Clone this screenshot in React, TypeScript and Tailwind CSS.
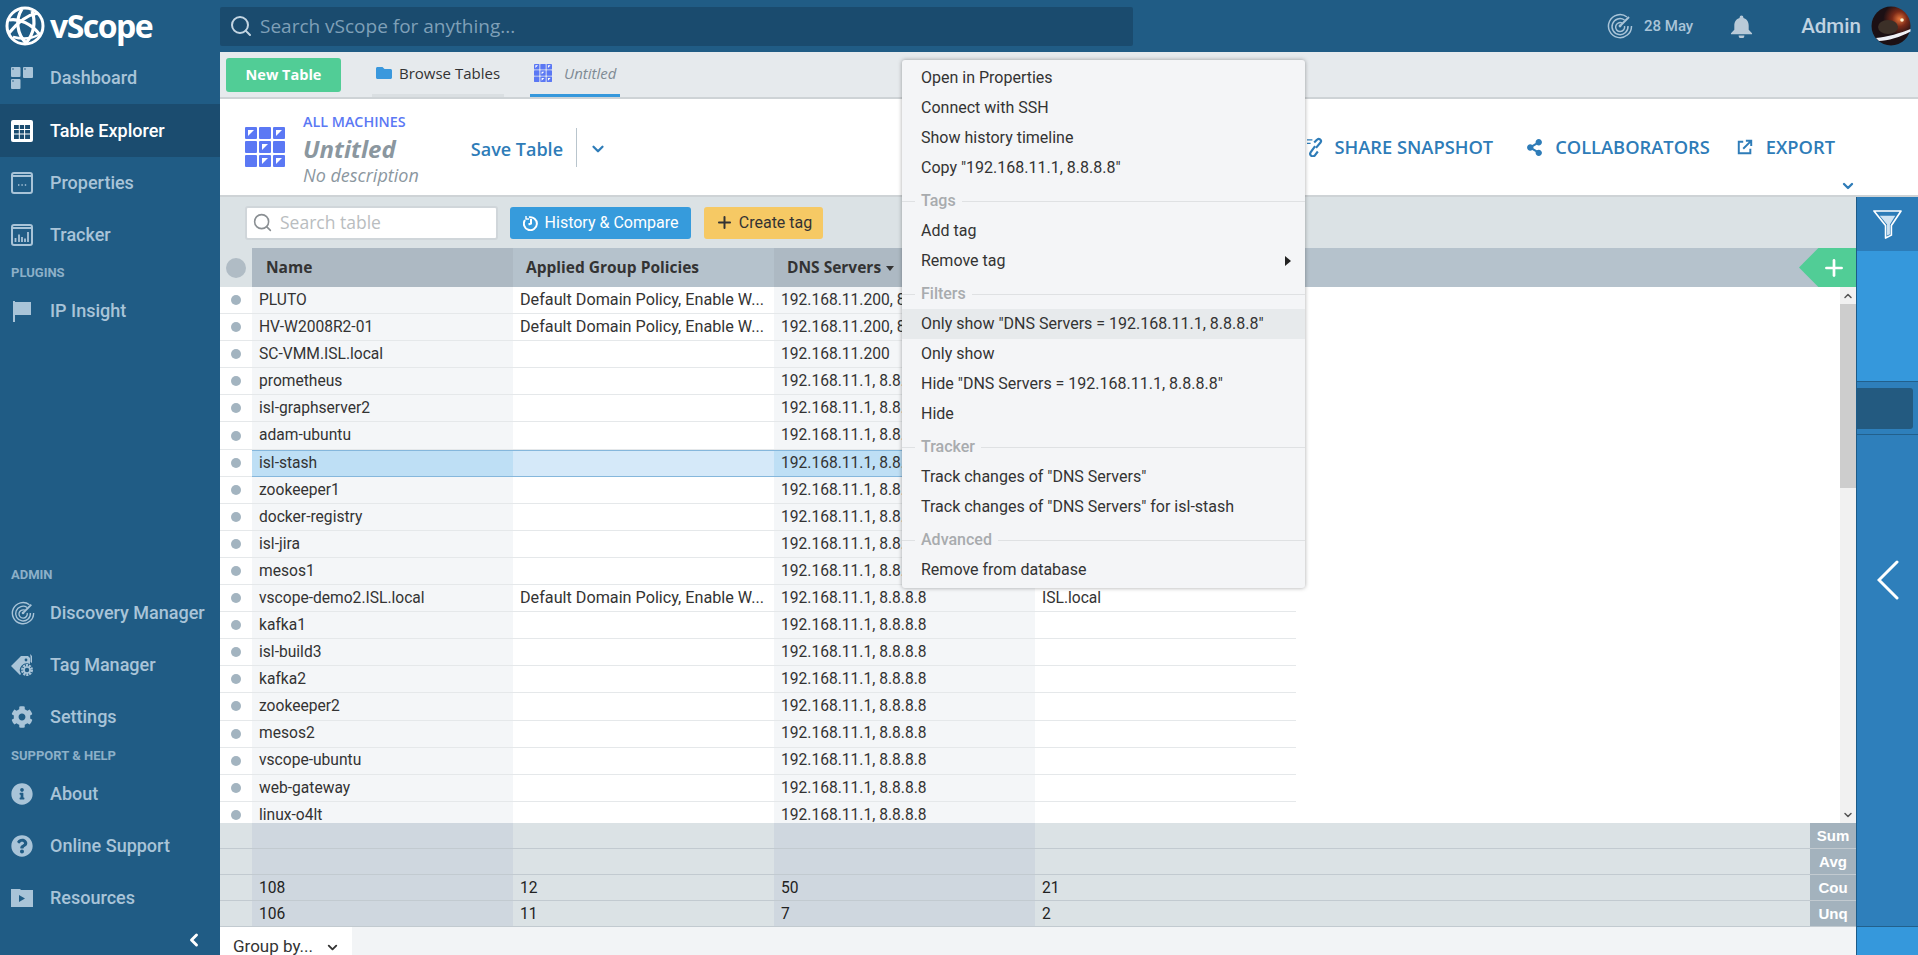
import { ChevronDown, ChevronLeft, ChevronUp, Plus, Search } from "lucide-react";
import { FaCog, FaFolder, FaInfoCircle, FaQuestionCircle, FaShareAlt } from "react-icons/fa";
import type { ReactNode } from "react";

const POLICY = "Default Domain Policy, Enable W...";
const DNS = "192.168.11.1, 8.8.8.8";
const DNS_OLD = "192.168.11.200, 8.8.8.8";

const rows = [
  { name: "PLUTO", policy: POLICY, dns: DNS_OLD },
  { name: "HV-W2008R2-01", policy: POLICY, dns: DNS_OLD },
  { name: "SC-VMM.ISL.local", dns: "192.168.11.200" },
  { name: "prometheus", dns: DNS },
  { name: "isl-graphserver2", dns: DNS },
  { name: "adam-ubuntu", dns: DNS },
  { name: "isl-stash", dns: DNS, selected: true },
  { name: "zookeeper1", dns: DNS },
  { name: "docker-registry", dns: DNS },
  { name: "isl-jira", dns: DNS },
  { name: "mesos1", dns: DNS },
  { name: "vscope-demo2.ISL.local", policy: POLICY, dns: DNS, domain: "ISL.local" },
  { name: "kafka1", dns: DNS },
  { name: "isl-build3", dns: DNS },
  { name: "kafka2", dns: DNS },
  { name: "zookeeper2", dns: DNS },
  { name: "mesos2", dns: DNS },
  { name: "vscope-ubuntu", dns: DNS },
  { name: "web-gateway", dns: DNS },
  { name: "linux-o4lt", dns: DNS },
];

const footerRows = [
  { label: "Sum", values: ["", "", "", ""] },
  { label: "Avg", values: ["", "", "", ""] },
  { label: "Cou", values: ["108", "12", "50", "21"] },
  { label: "Unq", values: ["106", "11", "7", "2"] },
];

function Globe() {
  return (
    <svg viewBox="0 0 40 40" className="h-[40px] w-[40px]" fill="none" stroke="#fff">
      <circle cx="20" cy="20" r="18" strokeWidth="3" />
      <path d="M4 27C12 17 22 9 33 7" strokeWidth="3.200" />
      <path d="M4 14C14 12 27 18 35 29" strokeWidth="3.200" />
      <path d="M17 3C10 14 12 28 21 37" strokeWidth="3.200" />
      <path d="M27 5C31 16 29 28 21 37" strokeWidth="3.200" />
      <path d="M8 31C16 33 26 33 33 29" strokeWidth="2.400" />
    </svg>
  );
}

function Radar({ className }: { className: string }) {
  return (
    <svg viewBox="0 0 26 26" className={className} fill="none" stroke="currentColor" strokeWidth="1.5">
      <path d="M20 4A11.5 11.5 0 1 0 24.5 13" />
      <path d="M17.5 7A8 8 0 1 0 21 13" />
      <path d="M15 10A4.5 4.5 0 1 0 17.5 13" />
      <path d="M13 13L22 4" strokeWidth="2" />
      <circle cx="13" cy="13" r="1.4" fill="currentColor" stroke="none" />
    </svg>
  );
}

function GridIcon({ size }: { size: number }) {
  const marked = [0, 2, 4, 7, 8];
  return (
    <svg viewBox="0 0 40 40" width={size} height={size}>
      {Array.from({ length: 9 }).map((_, i) => {
        const x = (i % 3) * 14;
        const y = Math.floor(i / 3) * 14;
        return (
          <g key={i}>
            <rect x={x} y={y} width="12" height="12" rx="1" fill="#5b78f4" />
            {marked.includes(i) ? (
              <path d={`M${x + 3} ${y + 9}V${y + 3}H${x + 9}Z`} fill="#fff" />
            ) : null}
          </g>
        );
      })}
    </svg>
  );
}

function DashboardIcon() {
  return (
    <svg viewBox="0 0 22 22" className="h-[22px] w-[22px]" fill="currentColor">
      <rect x="0" y="0" width="9.5" height="10" rx="1" />
      <rect x="12" y="0" width="10" height="11" rx="1" />
      <rect x="0" y="12" width="9.5" height="10" rx="1" />
      <g fill="#205c85">
        <circle cx="2" cy="2" r=".8" />
        <circle cx="14" cy="2" r=".8" />
        <circle cx="2" cy="14" r=".8" />
      </g>
    </svg>
  );
}

function TableIcon() {
  return (
    <svg viewBox="0 0 22 22" className="h-[22px] w-[22px]" fill="none">
      <rect x="0" y="0" width="22" height="22" rx="2" fill="#fff" />
      <rect x="3" y="5" width="16" height="14" fill="#1b4c6f" />
      <path d="M3 9.5H19M3 14H19M8.3 5V19M13.6 5V19" stroke="#fff" strokeWidth="1" />
    </svg>
  );
}

function PropertiesIcon() {
  return (
    <svg viewBox="0 0 22 22" className="h-[22px] w-[22px]" fill="none" stroke="currentColor">
      <rect x="1" y="1" width="20" height="20" rx="2" strokeWidth="2" />
      <path d="M1 4H21" strokeWidth="2" />
      <path d="M7 13H8.4M10.4 13H11.8M13.8 13H15.2" strokeWidth="1.6" />
    </svg>
  );
}

function TrackerIcon() {
  return (
    <svg viewBox="0 0 22 22" className="h-[22px] w-[22px]" fill="none" stroke="currentColor">
      <rect x="1" y="1" width="20" height="20" rx="2" strokeWidth="2" />
      <path d="M1 4H21" strokeWidth="2" />
      <path d="M4.500 18V14M8 18V10.500M11 18V13M14 18V14.500M17 18V8" strokeWidth="1.8" />
    </svg>
  );
}

function FlagIcon() {
  return (
    <svg viewBox="0 0 22 22" className="h-[22px] w-[22px]" fill="currentColor">
      <path d="M2 1H4V22H2Z" />
      <path d="M4 2H20V15H4Z" />
    </svg>
  );
}

function TagGearIcon() {
  return (
    <svg viewBox="0 0 24 24" className="h-[24px] w-[24px]" fill="currentColor">
      <path d="M0 13L10 3H17L19 5V11A7 7 0 0 0 10 21L9 22Z" />
      <path d="M19 1L21 3V10L19.500 9V3.500Z" />
      <circle cx="15" cy="7" r="1.4" fill="#205c85" />
      <circle cx="16" cy="17" r="4.500" fill="none" stroke="currentColor" strokeWidth="3" strokeDasharray="2 .8" />
      <circle cx="16" cy="17" r="3" fill="none" stroke="currentColor" strokeWidth="1.600" />
    </svg>
  );
}

function PlayIcon() {
  return (
    <svg viewBox="0 0 22 18" className="h-[18px] w-[22px]">
      <path d="M0 0H9L10 1H22V18H0Z" fill="currentColor" />
      <path d="M8 6L14 9.500L8 13Z" fill="#205c85" />
    </svg>
  );
}

function BellIcon() {
  return (
    <svg viewBox="0 0 24 24" className="ml-[37px] h-[23px] w-[23px] text-[#b9cad8]" fill="currentColor">
      <path d="M12 .5a2 2 0 0 1 2 2v.7c3.500.9 5.500 4 5.500 8v4.300l3.500 3.500v1H1v-1l3.500-3.500v-4.300c0-4 2-7.100 5.500-8v-.7a2 2 0 0 1 2-2z" />
      <path d="M9 21.500h6a3 3 0 0 1-6 0z" />
    </svg>
  );
}

function Funnel() {
  return (
    <svg viewBox="0 0 30 30" className="h-[29px] w-[29px]" fill="none" stroke="#fff">
      <path d="M1 1H29L19 16V26L13 29V16Z" strokeWidth="1.700" strokeLinejoin="round" />
      <path d="M7 6H23L17.500 15V25L14.500 26.500V15Z" fill="#cfe3f2" stroke="none" />
    </svg>
  );
}

function LinkIcon() {
  return (
    <svg viewBox="0 0 20 22" className="h-[20px] w-[18px]" fill="none" stroke="#2e7cb8" strokeWidth="2.400">
      <path d="M9 10L4 17A2.500 2.500 0 0 0 9 20L12 16" />
      <path d="M10 12L15 6A2.500 2.500 0 0 0 11 3L8 6" />
      <path d="M0 3H6M0 7H4" strokeWidth="1.500" />
    </svg>
  );
}

function ExportIcon() {
  return (
    <svg viewBox="0 0 18 18" className="h-[16px] w-[16px]" fill="none" stroke="#2e7cb8" strokeWidth="2.200">
      <path d="M7 3H2V16H15V11" />
      <path d="M7 11L15 3M10 2H16V8" />
    </svg>
  );
}

function HistoryIcon() {
  return (
    <svg viewBox="0 0 16 16" className="h-[16px] w-[16px]" fill="none" stroke="#fff" strokeWidth="2">
      <path d="M6 2.300A6.500 6.500 0 1 1 2 5" />
      <path d="M8 4V8.500L5.500 9.500" />
      <path d="M3 1V4H6" strokeWidth="1.400" />
    </svg>
  );
}

function Avatar() {
  return (
    <svg viewBox="0 0 40 40" className="h-[40px] w-[40px]">
      <defs>
        <radialGradient id="glow" cx="0.72" cy="0.32" r="0.42">
          <stop offset="0" stopColor="#e8783c" />
          <stop offset="0.45" stopColor="#7a2a18" />
          <stop offset="1" stopColor="#1c1014" />
        </radialGradient>
      </defs>
      <circle cx="20" cy="20" r="19.500" fill="url(#glow)" />
      <ellipse cx="17" cy="21" rx="10" ry="7" fill="#3c3028" />
      <path d="M5 32C16 31 30 27 39.500 23V25.500C30 31 16 35 8 35Z" fill="#eef0f6" />
      <circle cx="31" cy="14" r="1.800" fill="#fff3d0" />
    </svg>
  );
}

function NavItem({ icon, label, active }: { icon: ReactNode; label: string; active?: boolean }) {
  return (
    <div className={active ? "flex h-[53px] items-center bg-[#1b4c6f] pl-[11px] text-white" : "flex h-[52px] items-center pl-[11px] text-[#a9c4d8]"}>
      <span className="flex w-[39px] shrink-0 items-center">{icon}</span>
      <span className={active ? "text-[18px] font-medium" : "mb-[2px] text-[18px] font-medium"}>{label}</span>
    </div>
  );
}

function NavLabel({ children, className }: { children: ReactNode; className: string }) {
  return (
    <div className={`flex items-center pl-[11px] text-[13px] font-bold text-[#8db0c8] ${className}`}>
      {children}
    </div>
  );
}

function Sidebar() {
  return (
    <aside className="flex w-[220px] shrink-0 flex-col bg-[#205c85]">
      <NavItem icon={<DashboardIcon />} label="Dashboard" />
      <NavItem icon={<TableIcon />} label="Table Explorer" active />
      <NavItem icon={<PropertiesIcon />} label="Properties" />
      <NavItem icon={<TrackerIcon />} label="Tracker" />
      <NavLabel className="h-[24px]">PLUGINS</NavLabel>
      <NavItem icon={<FlagIcon />} label="IP Insight" />
      <div className="flex-1" />
      <NavLabel className="h-[24px]">ADMIN</NavLabel>
      <NavItem icon={<Radar className="h-[24px] w-[24px]" />} label="Discovery Manager" />
      <NavItem icon={<TagGearIcon />} label="Tag Manager" />
      <NavItem icon={<FaCog size={22} />} label="Settings" />
      <NavLabel className="h-[25px]">SUPPORT &amp; HELP</NavLabel>
      <NavItem icon={<FaInfoCircle size={22} />} label="About" />
      <NavItem icon={<FaQuestionCircle size={22} />} label="Online Support" />
      <NavItem icon={<PlayIcon />} label="Resources" />
      <div className="flex h-[31px] items-center justify-end pr-[16px] text-white">
        <ChevronLeft size={20} strokeWidth={3.5} />
      </div>
    </aside>
  );
}

function TopBar() {
  return (
    <header className="flex h-[52px] shrink-0 items-center bg-[#205c85]">
      <div className="flex w-[220px] shrink-0 items-center gap-[5px] pl-[5px]">
        <Globe />
        <span className="font-['Open_Sans'] text-[32px] font-bold tracking-[-1.5px] text-white">vScope</span>
      </div>
      <div className="flex h-[39px] w-[913px] items-center gap-[7px] rounded-[2px] bg-[#1a4b6e] pl-[9px]">
        <Search size={24} strokeWidth={2} className="text-[#c3d5e2]" />
        <span className="font-['Open_Sans'] text-[19px] text-[#7fa0b8]">Search vScope for anything...</span>
      </div>
      <div className="flex flex-1 items-center text-[#a9c4d8]">
        <Radar className="ml-[474px] h-[26px] w-[26px]" />
        <span className="ml-[11px] text-[15px] font-medium">28 May</span>
        <BellIcon />
        <span className="ml-[48px] text-[20.500px] font-medium text-[#c0d3e1]">Admin</span>
        <span className="ml-[10px]"><Avatar /></span>
      </div>
    </header>
  );
}

function TabsBar() {
  return (
    <div className="flex h-[47px] shrink-0 border-b-2 border-[#ced3d6] bg-[#e6eaed] pl-[6px] font-['Open_Sans']">
      <button className="mt-[6px] h-[34px] w-[115px] rounded-[3px] bg-[#51cd96] text-[14.500px] font-bold text-white">
        New Table
      </button>
      <div className="ml-[31px] flex h-[45px] w-[132px] items-center gap-[7px] border-b-[3px] border-[#dadfe2] pl-[4px] text-[15px] text-[#333]">
        <FaFolder size={16} className="text-[#3a98dd]" />
        Browse Tables
      </div>
      <div className="ml-[26px] flex h-[45px] w-[90px] items-center gap-[12px] border-b-[3px] border-[#3598dc] pl-[4px] text-[15px] italic text-[#7f8b94]">
        <GridIcon size={18} />
        Untitled
      </div>
    </div>
  );
}

function TitlePanel() {
  return (
    <div className="relative flex h-[98px] shrink-0 items-center border-b-2 border-[#ced3d6] bg-white pl-[25px] font-['Open_Sans']">
      <GridIcon size={40} />
      <div className="ml-[18px] mt-[2px] flex flex-col">
        <span className="text-[14.300px] font-semibold leading-[27px] text-[#5b78f4]">ALL MACHINES</span>
        <span className="text-[24px] font-bold italic leading-[27px] text-[#8b979f]">Untitled</span>
        <span className="text-[18px] italic leading-[27px] text-[#8b979f]">No description</span>
      </div>
      <span className="ml-[52px] mt-[4px] text-[18px] font-semibold text-[#2e7cb8]">Save Table</span>
      <span className="ml-[13px] h-[39px] w-px bg-[#b9c5cd]" />
      <ChevronDown size={18} strokeWidth={3} className="ml-[12px] mt-[4px] text-[#2e7cb8]" />
      <div className="flex flex-1 items-center pr-[83px] text-[18.300px] font-semibold text-[#2e7cb8]">
        <div className="ml-auto flex items-center gap-[9px]"><LinkIcon />SHARE SNAPSHOT</div>
        <div className="ml-[33px] flex items-center gap-[12px]"><FaShareAlt size={17} />COLLABORATORS</div>
        <div className="ml-[27px] flex items-center gap-[13px]"><ExportIcon />EXPORT</div>
      </div>
      <ChevronDown size={16} strokeWidth={3.5} className="absolute bottom-[1px] right-[62px] text-[#2e7cb8]" />
    </div>
  );
}

function Toolbar() {
  return (
    <div className="flex h-[51px] shrink-0 items-center bg-[#dbe2e5] pl-[25px] text-[16px]">
      <div className="flex h-[34px] w-[253px] items-center gap-[7px] rounded-[3px] border-2 border-[#d0d6da] bg-white pl-[5px] text-[#b9bdc0]">
        <Search size={21} strokeWidth={1.8} className="text-[#8a8f93]" />
        <span className="font-['Open_Sans'] text-[17.500px]">Search table</span>
      </div>
      <div className="ml-[12px] flex h-[32px] w-[181px] items-center justify-center gap-[6px] rounded-[3px] bg-[#369bdc] text-white">
        <HistoryIcon />
        History &amp; Compare
      </div>
      <div className="ml-[13px] flex h-[32px] w-[119px] items-center justify-center gap-[5px] rounded-[3px] bg-[#f6c964] text-[#333]">
        <Plus size={19} strokeWidth={2.5} />
        Create tag
      </div>
    </div>
  );
}

function TableHead() {
  return (
    <div className="relative flex h-[39px] shrink-0 items-center bg-[#b5c2cc] font-['Open_Sans'] text-[15.500px] font-bold text-[#333]">
      <div className="flex h-full w-[32px] items-center bg-[#dbe2e5] pl-[6px]">
        <span className="h-[20px] w-[20px] rounded-full bg-[#b0bcc5]" />
      </div>
      <div className="flex h-full w-[261px] items-center bg-[#adb9c3] pl-[14px]">Name</div>
      <div className="flex h-full w-[261px] items-center pl-[13px]">Applied Group Policies</div>
      <div className="flex h-full w-[261px] items-center gap-[5px] bg-[#adb9c3] pl-[13px]">
        DNS Servers
        <span className="mt-[1px] h-0 w-0 border-x-[4px] border-t-[5px] border-x-transparent border-t-[#333]" />
      </div>
      <div className="absolute right-0 top-0 flex h-full w-[57px] items-center justify-end bg-[#51cd96] pr-[9px] text-white [clip-path:polygon(34%_0,100%_0,100%_100%,34%_100%,0_50%)]">
        <Plus size={26} strokeWidth={2.5} />
      </div>
    </div>
  );
}

function TableBody() {
  return (
    <div className="flex h-[536px] shrink-0 bg-white">
      <div className="flex-1 overflow-hidden text-[15.600px] text-[#333]">
        {rows.map((row) => {
          const tinted = row.selected ? "bg-[#bedff5]" : "bg-[#f4f6f8]";
          const plain = row.selected ? "bg-[#d5e9f9]" : "";
          const line = row.selected ? "border-y border-[#85b7dc]" : "border-b border-[#e5e8ea]";
          return (
            <div key={row.name} className="flex h-[27.1px]">
              <div className="flex w-[32px] items-center border-b border-[#e5e8ea] pl-[11px]">
                <span className="h-[10px] w-[10px] rounded-full bg-[#a3b4c0]" />
              </div>
              <div className={`flex w-[261px] items-center pl-[7px] pt-px ${tinted} ${line}`}>{row.name}</div>
              <div className={`flex w-[261px] items-center whitespace-nowrap pl-[7px] pt-px text-[16.200px] ${plain} ${line}`}>{row.policy}</div>
              <div className={`flex w-[261px] items-center pl-[7px] pt-px ${tinted} ${line}`}>{row.dns}</div>
              <div className={`flex w-[261px] items-center pl-[7px] pt-px ${plain} ${line}`}>{row.domain}</div>
            </div>
          );
        })}
      </div>
      <div className="flex w-[16px] shrink-0 flex-col bg-[#f1f1f1] text-[#555]">
        <div className="flex h-[17px] items-center justify-center">
          <ChevronUp size={12} strokeWidth={3} />
        </div>
        <div className="h-[184px] bg-[#cdcdcd]" />
        <div className="flex-1" />
        <div className="flex h-[17px] items-center justify-center">
          <ChevronDown size={12} strokeWidth={3} />
        </div>
      </div>
    </div>
  );
}

function TableFooter() {
  return (
    <div className="shrink-0 text-[15.600px] text-[#222]">
      {footerRows.map((row) => (
        <div key={row.label} className="flex h-[26px] border-b border-[#c2cad0] bg-[#dbe2e5]">
          <div className="w-[32px]" />
          <div className="flex w-[261px] items-center bg-[#cfd7df] pl-[7px] pt-[2px]">{row.values[0]}</div>
          <div className="flex w-[261px] items-center pl-[7px] pt-[2px]">{row.values[1]}</div>
          <div className="flex w-[261px] items-center bg-[#cfd7df] pl-[7px] pt-[2px]">{row.values[2]}</div>
          <div className="flex w-[261px] items-center pl-[7px] pt-[2px]">{row.values[3]}</div>
          <div className="flex-1" />
          <div className="flex w-[46px] items-center justify-center bg-[#a3b2bd] pt-[2px] font-['Liberation_Sans'] text-[15px] font-bold text-white">
            {row.label}
          </div>
        </div>
      ))}
    </div>
  );
}

function RightPanel() {
  return (
    <div className="flex w-[62px] shrink-0 flex-col border-l border-[#1d5b88] bg-[#2e7fbb]">
      <div className="flex h-[54px] items-center justify-center bg-[#2c7cb8]">
        <Funnel />
      </div>
      <div className="h-[131px] border-b border-[#22608c] bg-[#3598dc]" />
      <div className="flex h-[53px] items-center border-b border-[#22608c] pr-[5px]">
        <div className="h-[41px] w-full rounded-r-[3px] bg-[#235a80]" />
      </div>
      <div className="flex flex-1 justify-center pt-[125px] text-white">
        <svg viewBox="0 0 22 40" className="h-[40px] w-[22px]" fill="none" stroke="currentColor" strokeWidth="3" strokeLinecap="round">
          <path d="M20 2L2 20L20 38" />
        </svg>
      </div>
      <div className="h-[29px] border-t border-[#22608c] bg-[#3598dc]" />
    </div>
  );
}

type MenuEntry = { label: string; heading?: boolean; active?: boolean; caret?: boolean };

const menuEntries: MenuEntry[] = [
  { label: "Open in Properties" },
  { label: "Connect with SSH" },
  { label: "Show history timeline" },
  { label: 'Copy "192.168.11.1, 8.8.8.8"' },
  { label: "Tags", heading: true },
  { label: "Add tag" },
  { label: "Remove tag", caret: true },
  { label: "Filters", heading: true },
  { label: 'Only show "DNS Servers = 192.168.11.1, 8.8.8.8"', active: true },
  { label: "Only show" },
  { label: 'Hide "DNS Servers = 192.168.11.1, 8.8.8.8"' },
  { label: "Hide" },
  { label: "Tracker", heading: true },
  { label: 'Track changes of "DNS Servers"' },
  { label: 'Track changes of "DNS Servers" for isl-stash' },
  { label: "Advanced", heading: true },
  { label: "Remove from database" },
];

function ContextMenu() {
  return (
    <div className="absolute left-[902px] top-[60px] w-[403px] rounded-[3px] bg-[#f4f5f7] pb-[3px] pt-[3px] text-[16px] text-[#333] shadow-[0_0_4px_rgba(0,0,0,0.35)]">
      {menuEntries.map((entry) =>
        entry.heading ? (
          <div key={entry.label} className="flex h-[33px] items-center pt-[3px] text-[#a8abae]">
            <span className="h-px w-[13px] bg-[#dfe1e3]" />
            <span className="mx-[6px] font-medium">{entry.label}</span>
            <span className="h-px flex-1 bg-[#dfe1e3]" />
          </div>
        ) : (
          <div
            key={entry.label}
            className={entry.active ? "flex h-[30px] items-center bg-[#e7eaec] pl-[19px]" : "flex h-[30px] items-center pl-[19px]"}
          >
            {entry.label}
            {entry.caret ? (
              <span className="ml-auto mr-[14px] h-0 w-0 border-y-[5px] border-l-[6px] border-y-transparent border-l-[#222]" />
            ) : null}
          </div>
        ),
      )}
    </div>
  );
}

export default function App() {
  return (
    <div className="relative flex h-[955px] w-[1918px] flex-col overflow-hidden bg-[#f2f4f6] font-['Roboto',sans-serif]">
      <TopBar />
      <div className="flex min-h-0 flex-1">
        <Sidebar />
        <main className="flex min-w-0 flex-1 flex-col">
          <TabsBar />
          <TitlePanel />
          <div className="flex min-h-0 flex-1">
            <div className="flex min-w-0 flex-1 flex-col">
              <Toolbar />
              <TableHead />
              <TableBody />
              <TableFooter />
              <div className="flex flex-1">
                <div className="flex w-[132px] items-start gap-[12px] bg-white pl-[13px] pt-[7px] text-[17px] text-[#333]">
                  Group by...
                  <ChevronDown size={15} strokeWidth={3} className="mt-[6px]" />
                </div>
              </div>
            </div>
            <RightPanel />
          </div>
        </main>
      </div>
      <ContextMenu />
    </div>
  );
}
